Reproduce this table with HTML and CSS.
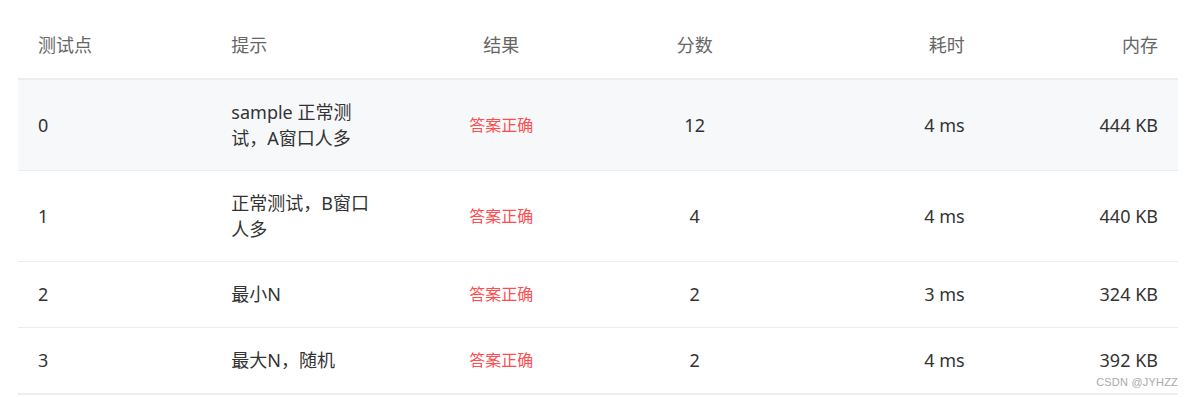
FILE: index.html
```html
<!DOCTYPE html>
<html lang="zh-CN">
<head>
<meta charset="utf-8">
<title>测试点结果</title>
<link rel="stylesheet" href="styles.css">
</head>
<body>
<div class="page">
  <table class="results">
    <thead>
      <tr>
        <th class="left">测试点</th>
        <th class="left">提示</th>
        <th class="center">结果</th>
        <th class="center">分数</th>
        <th class="right">耗时</th>
        <th class="right">内存</th>
      </tr>
    </thead>
    <tbody>
      <tr class="striped">
        <td class="left">0</td>
        <td class="left">sample 正常测试，A窗口人多</td>
        <td class="center ok">答案正确</td>
        <td class="center">12</td>
        <td class="right">4 ms</td>
        <td class="right">444 KB</td>
      </tr>
      <tr>
        <td class="left">1</td>
        <td class="left">正常测试，B窗口人多</td>
        <td class="center ok">答案正确</td>
        <td class="center">4</td>
        <td class="right">4 ms</td>
        <td class="right">440 KB</td>
      </tr>
      <tr class="single">
        <td class="left">2</td>
        <td class="left">最小N</td>
        <td class="center ok">答案正确</td>
        <td class="center">2</td>
        <td class="right">3 ms</td>
        <td class="right">324 KB</td>
      </tr>
      <tr class="single last">
        <td class="left">3</td>
        <td class="left">最大N，随机</td>
        <td class="center ok">答案正确</td>
        <td class="center">2</td>
        <td class="right">4 ms</td>
        <td class="right">392 KB</td>
      </tr>
    </tbody>
  </table>
  <div class="watermark">CSDN @JYHZZ</div>
</div>
</body>
</html>
```
FILE: styles.css
```css
html, body {
  margin: 0;
  padding: 0;
  background: #ffffff;
}
body {
  font-family: "Noto Sans", "Noto Sans CJK SC", sans-serif;
  color: #333333;
}
.page {
  position: relative;
  width: 1160px;
  padding-left: 18px;
}
.results {
  width: 1160px;
  table-layout: fixed;
  border-collapse: collapse;
  font-size: 18px;
  line-height: 26px;
}
.results th {
  font-weight: 400;
  color: #666666;
  padding: 32px 20px 20px;
  border-bottom: 2px solid #ebedf0;
}
.results td {
  padding: 19px 20px;
  border-bottom: 1px solid #ebedf0;
  color: #333333;
}
.results tr.single td {
  padding-bottom: 20px;
}
.results tr.striped td {
  background: #f7f8fa;
}
.results tr.last td {
  border-bottom: 2px solid #ebedf0;
}
.left { text-align: left; }
.center { text-align: center; }
.right { text-align: right; }
.results td.ok {
  color: #ff4d4f;
  font-size: 16px;
}
.watermark {
  position: absolute;
  right: 0;
  top: 376px;
  font-family: "Liberation Sans", sans-serif;
  font-size: 11px;
  color: #a9a9a9;
  letter-spacing: 0.2px;
}
```
